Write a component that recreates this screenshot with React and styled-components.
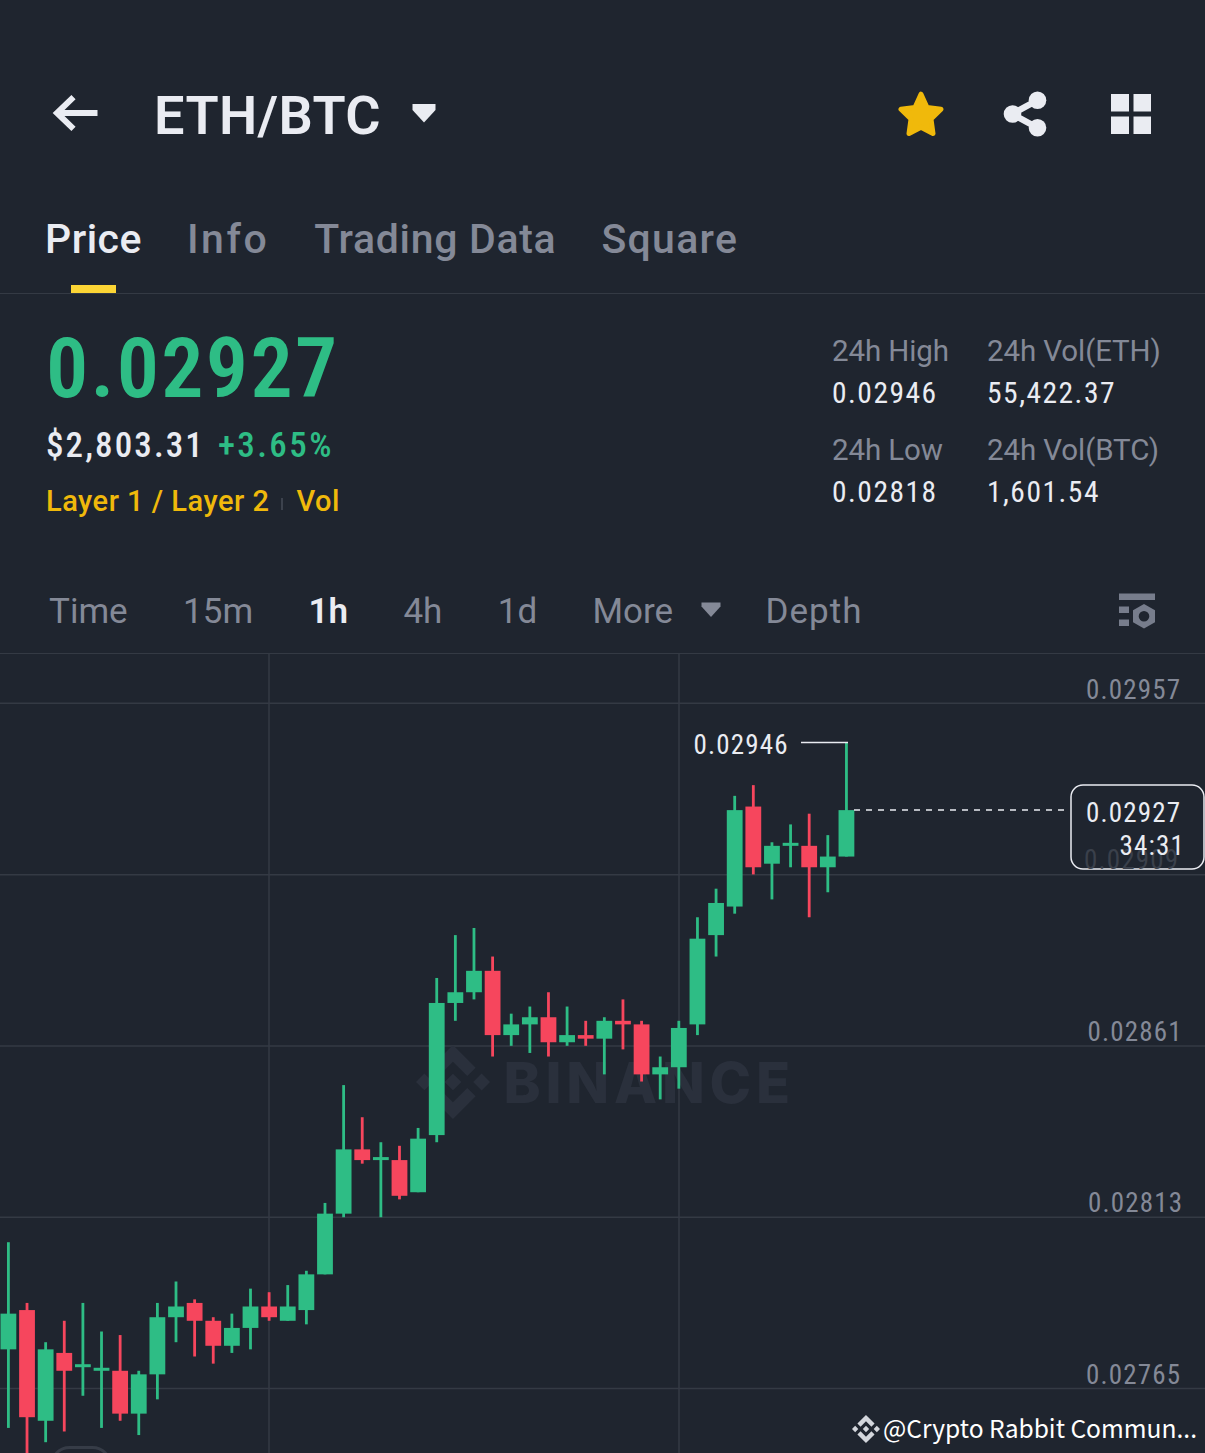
import styled, {createGlobalStyle} from "styled-components";
import {SiBinance} from "react-icons/si";

const GREEN = "#2ebd85"
const RED = "#f6465d"
const GRAY = "#848997"
const WHITE = "#eaecf2"
const BG = "#1f252f"
const LINE = "#343a44"

const TABS = [
  {label: "Price", spacing: 0.5, active: true},
  {label: "Info", spacing: 2.5},
  {label: "Trading Data", spacing: 0.7},
  {label: "Square", spacing: 1.3},
]

const STATS = [
  {label: "24h High", value: "0.02946"},
  {label: "24h Vol(ETH)", value: "55,422.37"},
  {label: "24h Low", value: "0.02818"},
  {label: "24h Vol(BTC)", value: "1,601.54"},
]

const INTERVALS = ["Time", "15m", "1h", "4h", "1d"]

// [open, high, low, close] in 0.00001 BTC
const CANDLES = [
  [2776, 2806, 2754, 2786],
  [2787, 2789, 2740, 2757],
  [2756, 2778, 2750, 2776],
  [2775, 2784, 2753, 2770],
  [2771, 2789, 2763, 2771],
  [2770, 2781, 2754, 2770],
  [2770, 2780, 2756, 2758],
  [2758, 2770, 2752, 2769],
  [2769, 2789, 2762, 2785],
  [2785, 2795, 2778, 2788],
  [2789, 2790, 2774, 2784],
  [2784, 2785, 2772, 2777],
  [2777, 2786, 2775, 2782],
  [2782, 2793, 2776, 2788],
  [2788, 2792, 2784, 2785],
  [2784, 2794, 2784, 2788],
  [2787, 2798, 2783, 2797],
  [2797, 2817, 2797, 2814],
  [2814, 2850, 2813, 2832],
  [2832, 2841, 2828, 2829],
  [2829, 2834, 2813, 2829],
  [2829, 2833, 2818, 2819],
  [2820, 2838, 2820, 2835],
  [2836, 2880, 2834, 2873],
  [2873, 2892, 2868, 2876],
  [2876, 2894, 2874, 2882],
  [2882, 2886, 2858, 2864],
  [2864, 2870, 2861, 2867],
  [2867, 2872, 2859, 2869],
  [2869, 2876, 2858, 2862],
  [2862, 2872, 2861, 2864],
  [2864, 2868, 2861, 2863],
  [2863, 2869, 2853, 2868],
  [2868, 2874, 2860, 2867],
  [2867, 2868, 2851, 2853],
  [2853, 2858, 2846, 2855],
  [2855, 2868, 2849, 2866],
  [2867, 2897, 2864, 2891],
  [2892, 2905, 2886, 2901],
  [2900, 2931, 2898, 2927],
  [2928, 2934, 2909, 2911],
  [2912, 2918, 2902, 2917],
  [2917, 2923, 2911, 2917],
  [2917, 2926, 2897, 2911],
  [2911, 2920, 2904, 2914],
  [2914, 2946, 2914, 2927],
]

const STEP = 18.623
const FIRST_X = 8.4
const TICK = 3.571

const toY = (price) => 49 + (2957 - price) * TICK

const Candle = ({index, candle}) => {
  const [open, high, low, close] = candle
  const x = FIRST_X + index * STEP
  const color = close < open ? RED : GREEN
  const bottom = toY(Math.min(open, close))
  const height = Math.max(bottom - toY(Math.max(open, close)), 3)
  return (
    <g fill={color}>
      <rect x={x - 1.4} y={toY(high)} width={2.8} height={toY(low) - toY(high)}/>
      <rect x={x - 7.9} y={bottom - height} width={15.8} height={height}/>
    </g>
  )
}

const Chart = () => (
  <ChartCanvas viewBox="0 0 1205 799">
    <g stroke={LINE} strokeWidth="1.5">
      {[49.3, 220.7, 392, 563.3, 734.5].map((y) => <line key={y} x1="0" x2="1205" y1={y} y2={y}/>)}
      {[269, 679].map((x) => <line key={x} x1={x} x2={x} y1="0" y2="799"/>)}
    </g>

    <SiBinance x="416" y="391" size={74} color="#2a303c"/>
    <Watermark x="503.5" y="448.5">BINANCE</Watermark>

    {CANDLES.map((candle, index) => <Candle key={index} index={index} candle={candle}/>)}

    <AxisLabel x="1086" y="44.5">0.02957</AxisLabel>
    <AxisLabel x="1087.5" y="386.5">0.02861</AxisLabel>
    <AxisLabel x="1088" y="557.5">0.02813</AxisLabel>
    <AxisLabel x="1086" y="729.5">0.02765</AxisLabel>

    <AxisLabel x="693.5" y="99.5" $bright>0.02946</AxisLabel>
    <line x1="801" x2="848" y1="88.5" y2="88.5" stroke={WHITE} strokeWidth="1.5"/>
    <line x1="854" x2="1066" y1="156" y2="156" stroke={WHITE} strokeWidth="1.5" strokeDasharray="6 6"/>

    <rect x="1071" y="131" width="133" height="84" rx="12" fill={BG} stroke={WHITE} strokeWidth="1.5"/>
    <AxisLabel x="1084" y="214.5" $ghost>0.02909</AxisLabel>
    <AxisLabel x="1086" y="167.5" $bright>0.02927</AxisLabel>
    <AxisLabel x="1119.5" y="200.5" $bright>34:31</AxisLabel>

    <rect x="51.5" y="793.5" width="59" height="60" rx="18" fill="none" stroke="#363c47" strokeWidth="3"/>
  </ChartCanvas>
)

export default function App() {
  return (
    <Screen>
      <GlobalStyle/>
      <Header>
        <svg width="46" height="40" viewBox="0 0 46 40" fill="none" stroke={WHITE} strokeWidth="6">
          <path d="M45.5 18H5M21.5 2.2L5 18l16.5 15.8"/>
        </svg>
        <Pair>ETH/BTC</Pair>
        <svg width="24" height="24" viewBox="0 0 24 24" fill={WHITE}>
          <path d="M0.5 1H23.5V7L12 19.5 0.5 7z"/>
        </svg>
        <Actions>
          <svg width="48" height="48" viewBox="0 0 48 48">
            <path
              d="M24 3.2L30 16.5L44 18.3L34 28L36 42.5L24 36.3L12 42.5L14 28L4 18.3L18 16.5z"
              fill="#f0b90b" stroke="#f0b90b" strokeWidth="5" strokeLinejoin="round"
            />
          </svg>
          <svg width="48" height="48" viewBox="0 0 48 48" fill={WHITE}>
            <path d="M35 9.5L10 23L35 36.5" fill="none" stroke={WHITE} strokeWidth="6.5"/>
            <circle cx="10.5" cy="23" r="8.8"/>
            <circle cx="35.5" cy="9.3" r="8.8"/>
            <circle cx="35.5" cy="36.8" r="8.8"/>
          </svg>
          <svg width="48" height="48" viewBox="0 0 48 48" fill={WHITE}>
            <path d="M4 3h18v17.5H4zM26.5 3h17.5v17.5H26.5zM4 25.5h18V43H4zM26.5 25.5h17.5V43H26.5z"/>
          </svg>
        </Actions>
      </Header>

      <Tabs>
        {TABS.map((tab) => (
          <Tab key={tab.label} $active={tab.active} $spacing={tab.spacing}>{tab.label}</Tab>
        ))}
      </Tabs>

      <Summary>
        <div>
          <LastPrice>0.02927</LastPrice>
          <FiatRow>
            <span>$2,803.31</span>
            <Change>+3.65%</Change>
          </FiatRow>
          <TagRow>
            <span>Layer 1 / Layer 2</span>
            <TagDivider/>
            <span>Vol</span>
          </TagRow>
        </div>
        <Stats>
          {STATS.map((stat) => (
            <div key={stat.label}>
              <StatLabel>{stat.label}</StatLabel>
              <StatValue>{stat.value}</StatValue>
            </div>
          ))}
        </Stats>
      </Summary>

      <IntervalBar>
        {INTERVALS.map((interval) => (
          <Interval key={interval} $active={interval === "1h"}>{interval}</Interval>
        ))}
        <More>
          More
          <svg width="20" height="20" viewBox="0 0 20 20" fill={GRAY}>
            <path d="M0.5 0.5H19.5V4.5L10 15 0.5 4.5z"/>
          </svg>
        </More>
        <Depth>Depth</Depth>
        <SettingsIcon width="38" height="38" viewBox="0 0 38 38" fill="#777d8c">
          <path d="M1 0.5H37V7H1zM1 13.5H11V20H1zM1 26.5H11V33H1z"/>
          <path
            fillRule="evenodd"
            d="M26 11L37 17.2V29.3L26 35.5L15 29.3V17.2zM26 17.9a5.3 5.3 0 1 0 0 10.6a5.3 5.3 0 1 0 0-10.6z"
          />
        </SettingsIcon>
      </IntervalBar>

      <ChartArea>
        <Chart/>
        <Credit>
          <SiBinance size={28} color="#d3d6dc"/>
          <span>@Crypto Rabbit Commun...</span>
        </Credit>
      </ChartArea>
    </Screen>
  )
}

const GlobalStyle = createGlobalStyle`
    body {
        margin: 0;
        background-color: ${BG};
    }

    svg {
        display: block;
        flex-shrink: 0;
    }
`

const Screen = styled.div`
    width: 1205px;
    height: 1453px;
    overflow: hidden;
    display: flex;
    flex-direction: column;
    background-color: ${BG};
    color: ${WHITE};
    font-family: Roboto, "Liberation Sans", sans-serif;
    white-space: nowrap;
`

const Header = styled.header`
    box-sizing: border-box;
    height: 170px;
    padding: 60px 50px 0 52px;
    display: flex;
    align-items: center;
    flex-shrink: 0;
`

const Pair = styled.h1`
    margin: 2px 29px 0 56px;
    width: 229px;
    font-size: 54px;
    font-weight: 600;
    line-height: 64px;
    letter-spacing: 0.4px;
`

const Actions = styled.div`
    margin-left: auto;
    display: flex;
    gap: 57px;
`

const Tabs = styled.nav`
    box-sizing: border-box;
    height: 124px;
    padding: 0 45px;
    display: flex;
    gap: 45px;
    border-bottom: 1px solid ${LINE};
    flex-shrink: 0;
`

const Tab = styled.div`
    position: relative;
    color: ${({$active}) => $active ? WHITE : GRAY};
    font-size: 41px;
    font-weight: 500;
    line-height: 139px;
    letter-spacing: ${({$spacing}) => $spacing}px;

    &::after {
        content: "";
        display: ${({$active}) => $active ? "block" : "none"};
        position: absolute;
        top: 115px;
        left: 26px;
        width: 45px;
        height: 8px;
        background-color: #fcd535;
    }
`

const Summary = styled.section`
    box-sizing: border-box;
    height: 276px;
    padding: 33px 44px 0 46px;
    display: flex;
    justify-content: space-between;
    flex-shrink: 0;
`

const LastPrice = styled.div`
    color: ${GREEN};
    font-size: 84px;
    font-weight: 600;
    font-stretch: 85%;
    line-height: 84px;
    letter-spacing: 2.3px;
`

const FiatRow = styled.div`
    margin-top: 15px;
    display: flex;
    gap: 13px;
    font-size: 35px;
    font-weight: 500;
    font-stretch: 85%;
    line-height: 40px;
    letter-spacing: 2.1px;
`

const Change = styled.span`
    color: ${GREEN};
    letter-spacing: 2.4px;
`

const TagRow = styled.div`
    margin-top: 20px;
    display: flex;
    align-items: center;
    color: #f0b90b;
    font-size: 29px;
    font-weight: 500;
    line-height: 30px;
    letter-spacing: 0.5px;
`

const TagDivider = styled.i`
    width: 2px;
    height: 12px;
    margin: 6px 13px 0 12px;
    background-color: #3c424d;
`

const Stats = styled.div`
    padding-top: 3px;
    display: grid;
    grid-template-columns: 155px 174px;
    row-gap: 15px;
    align-content: start;
`

const StatLabel = styled.div`
    color: ${GRAY};
    font-size: 29.5px;
    line-height: 42px;
    letter-spacing: -0.1px;
`

const StatValue = styled.div`
    font-size: 29.5px;
    font-stretch: 85%;
    line-height: 42px;
    letter-spacing: 1.5px;
`

const IntervalBar = styled.div`
    box-sizing: border-box;
    height: 84px;
    padding: 0 49px;
    display: flex;
    align-items: center;
    gap: 55.4px;
    border-bottom: 1px solid ${LINE};
    flex-shrink: 0;
`

const Interval = styled.div`
    color: ${({$active}) => $active ? WHITE : GRAY};
    font-size: 35px;
    font-weight: ${({$active}) => $active ? 600 : 400};
    line-height: 40px;
`

const More = styled(Interval)`
    display: flex;
    align-items: center;
    gap: 28px;
`

const Depth = styled(Interval)`
    margin-left: -11px;
    letter-spacing: 1px;
`

const SettingsIcon = styled.svg`
    margin-left: auto;
`

const ChartArea = styled.div`
    position: relative;
    height: 799px;
`

const ChartCanvas = styled.svg`
    width: 1205px;
    height: 799px;
`

const AxisLabel = styled.text`
    fill: ${({$bright, $ghost}) => $bright ? WHITE : $ghost ? "#3a404b" : GRAY};
    font-size: 27px;
    font-stretch: 85%;
    letter-spacing: 1.15px;
`

const Watermark = styled.text`
    fill: #2a303c;
    font-family: Inter, "Liberation Sans", sans-serif;
    font-size: 56px;
    font-weight: 800;
    letter-spacing: 4.8px;
`

const Credit = styled.div`
    position: absolute;
    right: 8px;
    bottom: 8px;
    display: flex;
    align-items: center;
    gap: 3px;
    color: #fff;
    font-family: "Noto Sans CJK SC", sans-serif;
    font-size: 24.6px;
    line-height: 36px;

    svg {
        margin-top: 3px;
    }
`
